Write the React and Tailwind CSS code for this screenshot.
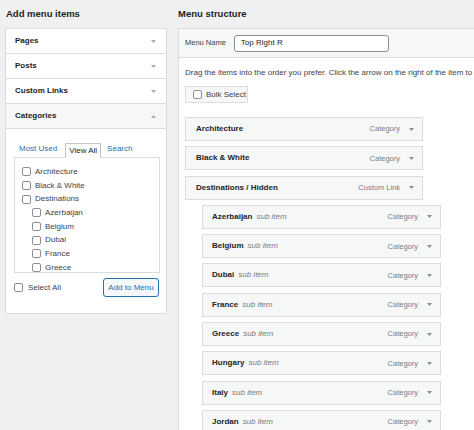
import React from 'react';

const Arrow = ({ up = false, color = '#a7aaad' }) => (
  <svg width="5" height="3" viewBox="0 0 5 3" className="shrink-0">
    <polygon points={up ? '0,3 5,3 2.5,0' : '0,0 5,0 2.5,3'} fill={color} />
  </svg>
);

const Box = () => (
  <span className="inline-block w-[9px] h-[9px] border border-[#8c8f94] rounded-[2px] bg-white shrink-0" />
);

const panels = ['Pages', 'Posts', 'Custom Links'];

const cats = [
  { name: 'Architecture', sub: false },
  { name: 'Black & White', sub: false },
  { name: 'Destinations', sub: false },
  { name: 'Azerbaijan', sub: true },
  { name: 'Belgium', sub: true },
  { name: 'Dubai', sub: true },
  { name: 'France', sub: true },
  { name: 'Greece', sub: true },
];

const items = [
  { name: 'Architecture', type: 'Category' },
  { name: 'Black & White', type: 'Category' },
  { name: 'Destinations / Hidden', type: 'Custom Link' },
  { name: 'Azerbaijan', type: 'Category', sub: true },
  { name: 'Belgium', type: 'Category', sub: true },
  { name: 'Dubai', type: 'Category', sub: true },
  { name: 'France', type: 'Category', sub: true },
  { name: 'Greece', type: 'Category', sub: true },
  { name: 'Hungary', type: 'Category', sub: true },
  { name: 'Italy', type: 'Category', sub: true },
  { name: 'Jordan', type: 'Category', sub: true },
];

export default function App() {
  return (
    <div className="w-[474px] h-[430px] overflow-hidden bg-[#f0f0f1] text-[#1d2327] font-['Liberation_Sans',Arial,sans-serif] flex">
      {/* LEFT: ADD MENU ITEMS */}
      <div className="w-[178px] shrink-0 pl-[5px]">
        <div className="h-[28px] flex items-center pl-[1px] pt-[1px]">
          <h2 className="text-[9.5px] font-bold">Add menu items</h2>
        </div>
        <div className="w-[162px] bg-white border border-[#dcdcde]">
          {panels.map((p) => (
            <div key={p} className="h-[25px] flex items-center justify-between pl-[9px] pr-[10px] border-b border-[#dcdcde]">
              <span className="text-[8px] font-bold">{p}</span>
              <Arrow />
            </div>
          ))}
          <div className="h-[25px] flex items-center justify-between pl-[9px] pr-[10px] border-b border-[#dcdcde] bg-[#f6f7f7]">
            <span className="text-[8px] font-bold">Categories</span>
            <Arrow up />
          </div>

          <div className="pt-[14px] pb-[16px] pl-[8px] pr-[6px]">
            <div className="flex items-end text-[8px] text-[#2271b1] h-[14px]">
              <span className="px-[5px] pb-[2px]">Most Used</span>
              <span className="ml-[3px] h-[15px] px-[3px] border border-[#c3c4c7] border-b-white bg-white text-[#1d2327] flex items-center relative z-10 -mb-px">View All</span>
              <span className="px-[6px] pb-[2px]">Search</span>
            </div>
            <div className="h-[116px] overflow-hidden border border-[#dcdcde] pt-[7px] pl-[7px]">
              {cats.map((c) => (
                <div key={c.name} className={`h-[13.7px] flex items-center gap-[4px] ${c.sub ? 'pl-[10px]' : ''}`}>
                  <Box />
                  <span className="text-[8px] text-[#3c434a]">{c.name}</span>
                </div>
              ))}
            </div>
            <div className="flex items-center justify-between mt-[5px] pr-[1px]">
              <div className="flex items-center gap-[5px]">
                <Box />
                <span className="text-[8px] text-[#3c434a]">Select All</span>
              </div>
              <button className="h-[19px] w-[56px] border border-[#2271b1] rounded-[3px] bg-[#f6f7f7] text-[8px] text-[#2271b1]">
                Add to Menu
              </button>
            </div>
          </div>
        </div>
      </div>

      {/* RIGHT: MENU STRUCTURE */}
      <div className="flex-1 min-w-0">
        <div className="h-[28px] flex items-center pt-[1px]">
          <h2 className="text-[9.5px] font-bold">Menu structure</h2>
        </div>
        <div className="w-[330px] h-[420px] bg-white border border-[#dcdcde]">
          <div className="h-[29px] bg-[#f6f7f7] border-b border-[#dcdcde] flex items-center pl-[6px] gap-[8px]">
            <span className="text-[7.5px] text-[#3c434a]">Menu Name</span>
            <div className="w-[155px] h-[17px] bg-white border border-[#8c8f94] rounded-[3px] flex items-center pl-[6px]">
              <span className="text-[8px]">Top Right R</span>
            </div>
          </div>
          <div className="pl-[6px] pt-[10px]">
            <p className="text-[8px] text-[#3c434a] whitespace-nowrap leading-[10px]">
              Drag the items into the order you prefer. Click the arrow on the right of the item to
            </p>
            <div className="mt-[8px] w-[63px] h-[17px] bg-[#f6f7f7] border border-[#dcdcde] flex items-center pl-[7px] gap-[4px]">
              <Box />
              <span className="text-[8px] text-[#3c434a]">Bulk Select</span>
            </div>
            <div className="mt-[14px]">
              {items.map((it) => (
                <div
                  key={it.name}
                  className={`h-[24px] mb-[5.3px] bg-[#f6f7f7] border border-[#dcdcde] flex items-center justify-between pr-[8px] ${it.sub ? 'ml-[17px] w-[239px] pl-[9px]' : 'w-[238px] pl-[10px]'}`}
                >
                  <span className="text-[8px] font-bold">
                    {it.name}
                    {it.sub && <i className="font-normal text-[#787c82] ml-[4px]">sub item</i>}
                  </span>
                  <span className="flex items-center gap-[9px]">
                    <span className="text-[7.5px] text-[#787c82]">{it.type}</span>
                    <Arrow color="#8c8f94" />
                  </span>
                </div>
              ))}
            </div>
          </div>
        </div>
      </div>
    </div>
  );
}
